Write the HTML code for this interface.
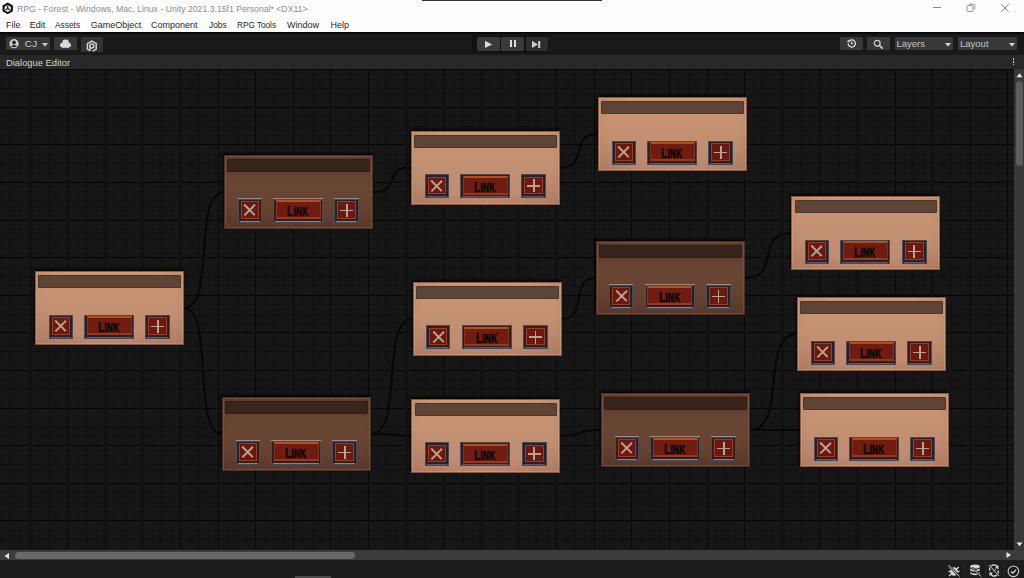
<!DOCTYPE html>
<html><head><meta charset="utf-8">
<style>
*{margin:0;padding:0;box-sizing:border-box}
html,body{width:1024px;height:578px;overflow:hidden;background:#1b1b1b;font-family:"Liberation Sans",sans-serif}
.a{position:absolute}
#titlebar{left:0;top:0;width:1024px;height:32px;background:#fefefe}
.menu{position:absolute;top:20px;font-size:9px;color:#262626;white-space:nowrap;line-height:11px}
#toolbar{left:0;top:32px;width:1024px;height:23px;background:#191919;border-top:2px solid #080808}
.btn{position:absolute;background:#383838;border-radius:1px}
#tabbar{left:0;top:55px;width:1024px;height:14px;background:#282828}
#canvas{left:0;top:69px;width:1014px;height:481px;background-color:#161616;overflow:hidden}
#hscroll{left:0;top:550px;width:1024px;height:10px;background:#3b3b3b}
#vscroll{left:1014px;top:69px;width:10px;height:481px;background:#383838}
#status{left:0;top:560px;width:1024px;height:18px;background:#1c1c1c}
.txt{position:absolute;white-space:nowrap;color:#c4c4c4}
.node{position:absolute;width:149px;height:74px;background:linear-gradient(#c99574,#c49072 45%,#be8b71);border:1px solid #8a5a40;box-shadow:-1px -2px 2px #060609,inset 0 0 0 1px #d39c78}
.node::before{content:"";position:absolute;left:0;top:0;right:0;bottom:0;background:radial-gradient(ellipse 75% 80% at 50% 40%,rgba(0,0,0,0) 60%,rgba(70,30,15,.16) 100%)}
.node.D{background:linear-gradient(#5c3d2d,#6a4634 40%,#674432 70%,#5b3b2c);border-color:#4a3024;box-shadow:-1px -2px 2px #060609,inset 0 0 0 1px #7a5141}
.hdr{position:absolute;left:2.3px;top:3px;right:2.2px;height:13px;background:#5e4436;border:1px solid #4c3428;border-radius:1px}
.D .hdr{background:#37251c;border-color:#2e1e16}
.bx,.bp,.bl{position:absolute;top:42.5px;height:24px;background:#26212a;box-shadow:inset 0 0 0 1px #4c4852}
.bx{left:12.5px;width:24px}.bp{left:109.3px;width:25px}.bl{left:48px;width:50px}
.bx::before,.bp::before{content:"";position:absolute;left:3px;top:2.5px;right:3px;bottom:4px;background:#6a1810;border:1px solid #a03c1a}
.bl::before{content:"";position:absolute;left:2.5px;top:1.5px;right:2.5px;bottom:3.5px;background:#701c10;border-top:2px solid #b0501c;border-bottom:2px solid #983818;border-left:1px solid #8a3014;border-right:1px solid #8a3014}
.bx::after,.bp::after,.bl::after{content:"";position:absolute;left:2px;right:2px;bottom:1px;height:1px;background:#5e5666}
.D .bx,.D .bp,.D .bl{box-shadow:inset 0 0 0 1px #4c4852,0 -1px 0 #9a8a86}
.D .bx::after,.D .bp::after,.D .bl::after{background:#8a8290}
.xg,.pg{position:absolute;left:50%;top:11.8px;width:0;height:0}
.xg::before,.xg::after,.pg::before,.pg::after{content:"";position:absolute;background:#b8a290}
.xg::before,.xg::after{left:-7.7px;top:-0.85px;width:15.4px;height:1.7px}
.xg::before{transform:rotate(45deg)}.xg::after{transform:rotate(-45deg)}
.pg::before{left:-6.5px;top:-0.75px;width:13px;height:1.5px}.pg::after{left:-0.75px;top:-6.5px;width:1.5px;height:13px}
.bl span{position:absolute;left:0;right:0;top:5.9px;text-align:center;font:bold 8.4px/10px "Liberation Sans",sans-serif;color:#0b0808;transform:scale(0.98,1.45);transform-origin:50% 0;letter-spacing:0.35px;-webkit-text-stroke:0.5px #0b0808}
.bl span b{font-size:9.6px}
</style></head><body>
<div id="titlebar" class="a">
  <svg class="a" style="left:2px;top:2px" width="12" height="13" viewBox="0 0 12 13">
    <polygon points="5.7,0.6 10.9,3.5 10.9,9.3 5.7,12.2 0.5,9.3 0.5,3.5" fill="#121212"/>
    <polygon points="5.7,3 8.8,4.8 8.8,8.2 5.7,10 2.6,8.2 2.6,4.8" fill="#f2f2f2"/>
    <path d="M5.7 3.8 V6.5 L3.4 7.9 M5.7 6.5 L8 7.9" fill="none" stroke="#121212" stroke-width="1.2"/>
  </svg>
  <div class="txt" style="left:17px;top:4px;font-size:8.7px;color:#8c8c8c;line-height:11px">RPG - Forest - Windows, Mac, Linux - Unity 2021.3.15f1 Personal* &lt;DX11&gt;</div>
  <div class="a" style="left:422px;top:0;width:180px;height:1px;background:#333"></div>
  <div class="a" style="left:933px;top:7px;width:7.5px;height:1px;background:#8a8a8a"></div>
  <svg class="a" style="left:966px;top:3px" width="10" height="9" viewBox="0 0 10 9"><rect x="1" y="2.5" width="6" height="6" rx="1" fill="none" stroke="#8a8a8a" stroke-width="0.9"/><path d="M3 1.2 H7.5 Q8.8 1.2 8.8 2.5 V6.5" fill="none" stroke="#8a8a8a" stroke-width="0.9"/></svg>
  <svg class="a" style="left:1001px;top:4px" width="8" height="8" viewBox="0 0 8 8"><path d="M0.3 0.3L7.7 7.7M7.7 0.3L0.3 7.7" stroke="#7a7a7a" stroke-width="0.9"/></svg>
  <div class="menu" style="left:6px">File</div>
  <div class="menu" style="left:29.7px">Edit</div>
  <div class="menu" style="left:55px;transform:scaleX(0.93);transform-origin:0 0">Assets</div>
  <div class="menu" style="left:90.8px">GameObject</div>
  <div class="menu" style="left:151px">Component</div>
  <div class="menu" style="left:209.4px;transform:scaleX(0.93);transform-origin:0 0">Jobs</div>
  <div class="menu" style="left:237.1px;transform:scaleX(0.91);transform-origin:0 0">RPG Tools</div>
  <div class="menu" style="left:286.9px">Window</div>
  <div class="menu" style="left:330.5px">Help</div>
</div>
<div id="toolbar" class="a">
  <div class="btn" style="left:6px;top:3px;width:44px;height:13px"></div>
  <svg class="a" style="left:9px;top:5px" width="10" height="10" viewBox="0 0 10 10">
    <circle cx="5" cy="4.7" r="4.6" fill="#d2d2d2"/>
    <circle cx="5" cy="3.5" r="1.9" fill="#262626"/>
    <path d="M1.9 7.6 Q2.6 5.9 5 5.9 Q7.4 5.9 8.1 7.6 Q5 8.8 1.9 7.6Z" fill="#262626"/>
  </svg>
  <div class="txt" style="left:24.8px;top:4.3px;font-size:9.9px;color:#c8c8c8;letter-spacing:0.4px;line-height:11px">CJ</div>
  <svg class="a" style="left:41.5px;top:8.8px" width="6" height="4" viewBox="0 0 6 4"><polygon points="0,0 6,0 3,3.4" fill="#d0d0d0"/></svg>
  <div class="btn" style="left:54px;top:3px;width:23px;height:13px"></div>
  <svg class="a" style="left:59px;top:4.2px" width="13" height="11" viewBox="0 0 13 11">
    <circle cx="6.6" cy="5" r="3.4" fill="#d8d8d8"/>
    <circle cx="3.4" cy="7.2" r="2.4" fill="#d8d8d8"/>
    <circle cx="9.8" cy="7" r="2.3" fill="#d8d8d8"/>
    <rect x="3.2" y="6.5" width="6.8" height="3.3" fill="#d8d8d8"/>
  </svg>
  <div class="btn" style="left:81px;top:3px;width:22px;height:15px;background:#333"></div>
  <svg class="a" style="left:86px;top:5.5px" width="12" height="12" viewBox="0 0 12 12">
    <path d="M4 10.6 L1.4 9.1 V3.6 L5.8 1.1 L10.2 3.6 V9.1 L6.6 11.2" fill="none" stroke="#d2d2d2" stroke-width="1.5"/>
    <circle cx="5.8" cy="6.1" r="2" fill="none" stroke="#d2d2d2" stroke-width="1.5"/>
    <path d="M4.2 7.4 V10.4" stroke="#d2d2d2" stroke-width="1.5"/>
  </svg>
  <div class="a" style="left:472px;top:1px;width:77px;height:18px;background:#121212"></div>
  <div class="btn" style="left:477px;top:3px;width:23px;height:13.5px;background:#3a3a3a"></div>
  <div class="btn" style="left:501px;top:3px;width:23px;height:13.5px;background:#3a3a3a"></div>
  <div class="btn" style="left:526px;top:3px;width:21.5px;height:13.5px;background:#2e2e2e"></div>
  <svg class="a" style="left:484px;top:5.5px" width="9" height="9" viewBox="0 0 9 9"><polygon points="1,0.8 8.2,4.4 1,8" fill="#d8d8d8"/></svg>
  <div class="a" style="left:509.5px;top:6px;width:2px;height:7px;background:#e0e0e0"></div>
  <div class="a" style="left:514px;top:6px;width:2px;height:7px;background:#e0e0e0"></div>
  <svg class="a" style="left:531px;top:5.5px" width="10" height="9" viewBox="0 0 10 9"><polygon points="1,0.8 7,4.4 1,8" fill="#cfcfcf"/><rect x="7.2" y="1" width="2" height="7" fill="#cfcfcf"/></svg>
  <div class="btn" style="left:840px;top:3px;width:22.5px;height:13px"></div>
  <svg class="a" style="left:846px;top:4px" width="11" height="11" viewBox="0 0 11 11">
    <path d="M2.2 5.5 A3.6 3.6 0 1 0 3.3 2.9" fill="none" stroke="#dcdcdc" stroke-width="1.3"/>
    <polygon points="0.6,3.4 3.4,1.4 3.8,4.6" fill="#dcdcdc"/>
    <path d="M5.6 3.5 V5.8 H7.4" fill="none" stroke="#dcdcdc" stroke-width="1.1"/>
  </svg>
  <div class="btn" style="left:867px;top:3px;width:22.5px;height:13px"></div>
  <svg class="a" style="left:873px;top:4.5px" width="11" height="11" viewBox="0 0 11 11">
    <circle cx="4.2" cy="4.2" r="2.9" fill="none" stroke="#d8d8d8" stroke-width="1.2"/>
    <path d="M6.3 6.3 L9.6 9.6" stroke="#d8d8d8" stroke-width="1.6"/>
  </svg>
  <div class="btn" style="left:894.5px;top:3px;width:58px;height:13px"></div>
  <div class="txt" style="left:896.5px;top:3.6px;font-size:9.5px;color:#c4c4c4;line-height:11px">Layers</div>
  <svg class="a" style="left:945px;top:8.5px" width="6" height="4" viewBox="0 0 6 4"><polygon points="0,0 6,0 3,3.6" fill="#d8d8d8"/></svg>
  <div class="btn" style="left:958px;top:3px;width:58.5px;height:13px"></div>
  <div class="txt" style="left:960px;top:3.6px;font-size:9.5px;color:#c4c4c4;line-height:11px">Layout</div>
  <svg class="a" style="left:1008.5px;top:8.5px" width="6" height="4" viewBox="0 0 6 4"><polygon points="0,0 6,0 3,3.6" fill="#d8d8d8"/></svg>
</div>
<div id="tabbar" class="a">
  <div class="txt" style="left:6px;top:2px;font-size:9.4px;color:#d2d2d2;line-height:11px">Dialogue Editor</div>
  <div class="a" style="left:1012.5px;top:3px;width:1.6px;height:1.6px;background:#eee;border-radius:1px"></div>
  <div class="a" style="left:1012.5px;top:6px;width:1.6px;height:1.6px;background:#eee;border-radius:1px"></div>
  <div class="a" style="left:1012.5px;top:8.8px;width:1.6px;height:1.6px;background:#eee;border-radius:1px"></div>
</div>
<div id="canvas" class="a">
<!--CANVAS-->
<svg class="a" style="left:0;top:0" width="1014" height="481" shape-rendering="crispEdges">
<rect x="1" y="0" width="1" height="481" fill="#141414"/>
<rect x="20" y="0" width="1" height="481" fill="#141414"/>
<rect x="39" y="0" width="1" height="481" fill="#141414"/>
<rect x="58" y="0" width="1" height="481" fill="#141414"/>
<rect x="77" y="0" width="1" height="481" fill="#141414"/>
<rect x="96" y="0" width="1" height="481" fill="#141414"/>
<rect x="114" y="0" width="1" height="481" fill="#141414"/>
<rect x="133" y="0" width="1" height="481" fill="#141414"/>
<rect x="152" y="0" width="1" height="481" fill="#141414"/>
<rect x="171" y="0" width="1" height="481" fill="#141414"/>
<rect x="190" y="0" width="1" height="481" fill="#141414"/>
<rect x="208" y="0" width="1" height="481" fill="#141414"/>
<rect x="227" y="0" width="1" height="481" fill="#141414"/>
<rect x="246" y="0" width="1" height="481" fill="#141414"/>
<rect x="265" y="0" width="1" height="481" fill="#141414"/>
<rect x="284" y="0" width="1" height="481" fill="#141414"/>
<rect x="302" y="0" width="1" height="481" fill="#141414"/>
<rect x="321" y="0" width="1" height="481" fill="#141414"/>
<rect x="340" y="0" width="1" height="481" fill="#141414"/>
<rect x="359" y="0" width="1" height="481" fill="#141414"/>
<rect x="378" y="0" width="1" height="481" fill="#141414"/>
<rect x="396" y="0" width="1" height="481" fill="#141414"/>
<rect x="415" y="0" width="1" height="481" fill="#141414"/>
<rect x="434" y="0" width="1" height="481" fill="#141414"/>
<rect x="453" y="0" width="1" height="481" fill="#141414"/>
<rect x="472" y="0" width="1" height="481" fill="#141414"/>
<rect x="490" y="0" width="1" height="481" fill="#141414"/>
<rect x="509" y="0" width="1" height="481" fill="#141414"/>
<rect x="528" y="0" width="1" height="481" fill="#141414"/>
<rect x="547" y="0" width="1" height="481" fill="#141414"/>
<rect x="566" y="0" width="1" height="481" fill="#141414"/>
<rect x="584" y="0" width="1" height="481" fill="#141414"/>
<rect x="603" y="0" width="1" height="481" fill="#141414"/>
<rect x="622" y="0" width="1" height="481" fill="#141414"/>
<rect x="641" y="0" width="1" height="481" fill="#141414"/>
<rect x="660" y="0" width="1" height="481" fill="#141414"/>
<rect x="678" y="0" width="1" height="481" fill="#141414"/>
<rect x="697" y="0" width="1" height="481" fill="#141414"/>
<rect x="716" y="0" width="1" height="481" fill="#141414"/>
<rect x="735" y="0" width="1" height="481" fill="#141414"/>
<rect x="754" y="0" width="1" height="481" fill="#141414"/>
<rect x="772" y="0" width="1" height="481" fill="#141414"/>
<rect x="791" y="0" width="1" height="481" fill="#141414"/>
<rect x="810" y="0" width="1" height="481" fill="#141414"/>
<rect x="829" y="0" width="1" height="481" fill="#141414"/>
<rect x="848" y="0" width="1" height="481" fill="#141414"/>
<rect x="866" y="0" width="1" height="481" fill="#141414"/>
<rect x="885" y="0" width="1" height="481" fill="#141414"/>
<rect x="904" y="0" width="1" height="481" fill="#141414"/>
<rect x="923" y="0" width="1" height="481" fill="#141414"/>
<rect x="942" y="0" width="1" height="481" fill="#141414"/>
<rect x="960" y="0" width="1" height="481" fill="#141414"/>
<rect x="979" y="0" width="1" height="481" fill="#141414"/>
<rect x="998" y="0" width="1" height="481" fill="#141414"/>
<rect x="0" y="10" width="1014" height="1" fill="#141414"/>
<rect x="0" y="28" width="1014" height="1" fill="#141414"/>
<rect x="0" y="47" width="1014" height="1" fill="#141414"/>
<rect x="0" y="66" width="1014" height="1" fill="#141414"/>
<rect x="0" y="85" width="1014" height="1" fill="#141414"/>
<rect x="0" y="104" width="1014" height="1" fill="#141414"/>
<rect x="0" y="122" width="1014" height="1" fill="#141414"/>
<rect x="0" y="141" width="1014" height="1" fill="#141414"/>
<rect x="0" y="160" width="1014" height="1" fill="#141414"/>
<rect x="0" y="179" width="1014" height="1" fill="#141414"/>
<rect x="0" y="198" width="1014" height="1" fill="#141414"/>
<rect x="0" y="216" width="1014" height="1" fill="#141414"/>
<rect x="0" y="235" width="1014" height="1" fill="#141414"/>
<rect x="0" y="254" width="1014" height="1" fill="#141414"/>
<rect x="0" y="273" width="1014" height="1" fill="#141414"/>
<rect x="0" y="292" width="1014" height="1" fill="#141414"/>
<rect x="0" y="310" width="1014" height="1" fill="#141414"/>
<rect x="0" y="329" width="1014" height="1" fill="#141414"/>
<rect x="0" y="348" width="1014" height="1" fill="#141414"/>
<rect x="0" y="367" width="1014" height="1" fill="#141414"/>
<rect x="0" y="386" width="1014" height="1" fill="#141414"/>
<rect x="0" y="404" width="1014" height="1" fill="#141414"/>
<rect x="0" y="423" width="1014" height="1" fill="#141414"/>
<rect x="0" y="442" width="1014" height="1" fill="#141414"/>
<rect x="0" y="461" width="1014" height="1" fill="#141414"/>
<rect x="0" y="480" width="1014" height="1" fill="#141414"/>
<rect x="11" y="0" width="1" height="481" fill="#111111"/>
<rect x="48" y="0" width="1" height="481" fill="#111111"/>
<rect x="86" y="0" width="1" height="481" fill="#111111"/>
<rect x="124" y="0" width="1" height="481" fill="#111111"/>
<rect x="161" y="0" width="1" height="481" fill="#111111"/>
<rect x="199" y="0" width="1" height="481" fill="#111111"/>
<rect x="236" y="0" width="1" height="481" fill="#111111"/>
<rect x="274" y="0" width="1" height="481" fill="#111111"/>
<rect x="312" y="0" width="1" height="481" fill="#111111"/>
<rect x="349" y="0" width="1" height="481" fill="#111111"/>
<rect x="387" y="0" width="1" height="481" fill="#111111"/>
<rect x="424" y="0" width="1" height="481" fill="#111111"/>
<rect x="462" y="0" width="1" height="481" fill="#111111"/>
<rect x="500" y="0" width="1" height="481" fill="#111111"/>
<rect x="537" y="0" width="1" height="481" fill="#111111"/>
<rect x="575" y="0" width="1" height="481" fill="#111111"/>
<rect x="613" y="0" width="1" height="481" fill="#111111"/>
<rect x="650" y="0" width="1" height="481" fill="#111111"/>
<rect x="688" y="0" width="1" height="481" fill="#111111"/>
<rect x="725" y="0" width="1" height="481" fill="#111111"/>
<rect x="763" y="0" width="1" height="481" fill="#111111"/>
<rect x="801" y="0" width="1" height="481" fill="#111111"/>
<rect x="838" y="0" width="1" height="481" fill="#111111"/>
<rect x="876" y="0" width="1" height="481" fill="#111111"/>
<rect x="913" y="0" width="1" height="481" fill="#111111"/>
<rect x="951" y="0" width="1" height="481" fill="#111111"/>
<rect x="989" y="0" width="1" height="481" fill="#111111"/>
<rect x="0" y="19" width="1014" height="1" fill="#111111"/>
<rect x="0" y="57" width="1014" height="1" fill="#111111"/>
<rect x="0" y="94" width="1014" height="1" fill="#111111"/>
<rect x="0" y="132" width="1014" height="1" fill="#111111"/>
<rect x="0" y="169" width="1014" height="1" fill="#111111"/>
<rect x="0" y="207" width="1014" height="1" fill="#111111"/>
<rect x="0" y="245" width="1014" height="1" fill="#111111"/>
<rect x="0" y="282" width="1014" height="1" fill="#111111"/>
<rect x="0" y="320" width="1014" height="1" fill="#111111"/>
<rect x="0" y="357" width="1014" height="1" fill="#111111"/>
<rect x="0" y="395" width="1014" height="1" fill="#111111"/>
<rect x="0" y="433" width="1014" height="1" fill="#111111"/>
<rect x="0" y="470" width="1014" height="1" fill="#111111"/>
<rect x="30" y="0" width="1" height="481" fill="#080808"/>
<rect x="67" y="0" width="1" height="481" fill="#080808"/>
<rect x="105" y="0" width="1" height="481" fill="#080808"/>
<rect x="142" y="0" width="1" height="481" fill="#080808"/>
<rect x="180" y="0" width="1" height="481" fill="#080808"/>
<rect x="218" y="0" width="1" height="481" fill="#080808"/>
<rect x="255" y="0" width="1" height="481" fill="#080808"/>
<rect x="293" y="0" width="1" height="481" fill="#080808"/>
<rect x="330" y="0" width="1" height="481" fill="#080808"/>
<rect x="368" y="0" width="1" height="481" fill="#080808"/>
<rect x="406" y="0" width="1" height="481" fill="#080808"/>
<rect x="443" y="0" width="1" height="481" fill="#080808"/>
<rect x="481" y="0" width="1" height="481" fill="#080808"/>
<rect x="518" y="0" width="1" height="481" fill="#080808"/>
<rect x="556" y="0" width="1" height="481" fill="#080808"/>
<rect x="594" y="0" width="1" height="481" fill="#080808"/>
<rect x="631" y="0" width="1" height="481" fill="#080808"/>
<rect x="669" y="0" width="1" height="481" fill="#080808"/>
<rect x="707" y="0" width="1" height="481" fill="#080808"/>
<rect x="744" y="0" width="1" height="481" fill="#080808"/>
<rect x="782" y="0" width="1" height="481" fill="#080808"/>
<rect x="819" y="0" width="1" height="481" fill="#080808"/>
<rect x="857" y="0" width="1" height="481" fill="#080808"/>
<rect x="895" y="0" width="1" height="481" fill="#080808"/>
<rect x="932" y="0" width="1" height="481" fill="#080808"/>
<rect x="970" y="0" width="1" height="481" fill="#080808"/>
<rect x="1007" y="0" width="1" height="481" fill="#080808"/>
<rect x="0" y="0" width="1014" height="1" fill="#080808"/>
<rect x="0" y="38" width="1014" height="1" fill="#080808"/>
<rect x="0" y="75" width="1014" height="1" fill="#080808"/>
<rect x="0" y="113" width="1014" height="1" fill="#080808"/>
<rect x="0" y="151" width="1014" height="1" fill="#080808"/>
<rect x="0" y="188" width="1014" height="1" fill="#080808"/>
<rect x="0" y="226" width="1014" height="1" fill="#080808"/>
<rect x="0" y="263" width="1014" height="1" fill="#080808"/>
<rect x="0" y="301" width="1014" height="1" fill="#080808"/>
<rect x="0" y="339" width="1014" height="1" fill="#080808"/>
<rect x="0" y="376" width="1014" height="1" fill="#080808"/>
<rect x="0" y="414" width="1014" height="1" fill="#080808"/>
<rect x="0" y="451" width="1014" height="1" fill="#080808"/>
</svg>
<svg class="a" style="left:0;top:0" width="1014" height="481">
<path d="M184.0 239.0 C216.0 239.0 192.0 123.0 224.0 123.0" fill="none" stroke="#070707" stroke-width="2.1"/>
<path d="M184.0 239.0 C214.4 239.0 191.6 365.0 222.0 365.0" fill="none" stroke="#070707" stroke-width="2.1"/>
<path d="M373.0 123.0 C403.4 123.0 380.6 98.6 411.0 98.6" fill="none" stroke="#070707" stroke-width="2.1"/>
<path d="M560.0 98.6 C590.4 98.6 567.6 65.0 598.0 65.0" fill="none" stroke="#070707" stroke-width="2.1"/>
<path d="M371.0 365.0 C404.4 365.0 379.4 249.8 412.8 249.8" fill="none" stroke="#070707" stroke-width="2.1"/>
<path d="M371.0 365.0 C403.2 365.0 379.1 366.5 411.3 366.5" fill="none" stroke="#070707" stroke-width="2.1"/>
<path d="M561.8 249.8 C589.0 249.8 568.6 209.0 595.8 209.0" fill="none" stroke="#070707" stroke-width="2.1"/>
<path d="M744.8 209.0 C782.0 209.0 754.1 164.0 791.3 164.0" fill="none" stroke="#070707" stroke-width="2.1"/>
<path d="M560.3 366.5 C592.9 366.5 568.4 361.0 601.0 361.0" fill="none" stroke="#070707" stroke-width="2.1"/>
<path d="M750.0 361.0 C787.6 361.0 759.4 265.0 797.0 265.0" fill="none" stroke="#070707" stroke-width="2.1"/>
<path d="M750.0 361.0 C790.2 361.0 760.0 361.0 800.2 361.0" fill="none" stroke="#070707" stroke-width="2.1"/>
</svg>
<div class="node L" style="left:35.0px;top:202.0px"><div class="hdr"></div><div class="bx"><i class="xg"></i></div><div class="bl"><span><b>L</b>INK</span></div><div class="bp"><i class="pg"></i></div></div>
<div class="node D" style="left:224.0px;top:86.0px"><div class="hdr"></div><div class="bx"><i class="xg"></i></div><div class="bl"><span><b>L</b>INK</span></div><div class="bp"><i class="pg"></i></div></div>
<div class="node L" style="left:411.0px;top:61.6px"><div class="hdr"></div><div class="bx"><i class="xg"></i></div><div class="bl"><span><b>L</b>INK</span></div><div class="bp"><i class="pg"></i></div></div>
<div class="node L" style="left:598.0px;top:28.0px"><div class="hdr"></div><div class="bx"><i class="xg"></i></div><div class="bl"><span><b>L</b>INK</span></div><div class="bp"><i class="pg"></i></div></div>
<div class="node L" style="left:791.3px;top:127.0px"><div class="hdr"></div><div class="bx"><i class="xg"></i></div><div class="bl"><span><b>L</b>INK</span></div><div class="bp"><i class="pg"></i></div></div>
<div class="node D" style="left:595.8px;top:172.0px"><div class="hdr"></div><div class="bx"><i class="xg"></i></div><div class="bl"><span><b>L</b>INK</span></div><div class="bp"><i class="pg"></i></div></div>
<div class="node L" style="left:412.8px;top:212.8px"><div class="hdr"></div><div class="bx"><i class="xg"></i></div><div class="bl"><span><b>L</b>INK</span></div><div class="bp"><i class="pg"></i></div></div>
<div class="node L" style="left:797.0px;top:228.0px"><div class="hdr"></div><div class="bx"><i class="xg"></i></div><div class="bl"><span><b>L</b>INK</span></div><div class="bp"><i class="pg"></i></div></div>
<div class="node D" style="left:222.0px;top:328.0px"><div class="hdr"></div><div class="bx"><i class="xg"></i></div><div class="bl"><span><b>L</b>INK</span></div><div class="bp"><i class="pg"></i></div></div>
<div class="node L" style="left:411.3px;top:329.5px"><div class="hdr"></div><div class="bx"><i class="xg"></i></div><div class="bl"><span><b>L</b>INK</span></div><div class="bp"><i class="pg"></i></div></div>
<div class="node D" style="left:601.0px;top:324.0px"><div class="hdr"></div><div class="bx"><i class="xg"></i></div><div class="bl"><span><b>L</b>INK</span></div><div class="bp"><i class="pg"></i></div></div>
<div class="node L" style="left:800.2px;top:324.0px"><div class="hdr"></div><div class="bx"><i class="xg"></i></div><div class="bl"><span><b>L</b>INK</span></div><div class="bp"><i class="pg"></i></div></div>
<!--/CANVAS-->
</div>
<div id="hscroll" class="a">
  <div class="a" style="left:15px;top:2px;width:340px;height:7px;background:#676767;border-radius:3.5px"></div>
  <svg class="a" style="left:3.5px;top:2.5px" width="6" height="6" viewBox="0 0 6 6"><polygon points="5,0 5,6 0.5,3" fill="#e6e6e6"/></svg>
  <svg class="a" style="left:1006px;top:2px" width="6" height="6" viewBox="0 0 6 6"><polygon points="0.5,0 0.5,6 5,3" fill="#e6e6e6"/></svg>
</div>
<div id="vscroll" class="a">
  <svg class="a" style="left:2px;top:4px" width="7" height="5" viewBox="0 0 7 5"><polygon points="0.5,4.2 6.5,4.2 3.5,0.3" fill="#e6e6e6"/></svg>
  <div class="a" style="left:2px;top:12px;width:7px;height:85px;background:#5c5c5c;border-radius:3.5px"></div>
  <svg class="a" style="left:2px;top:473px" width="7" height="5" viewBox="0 0 7 5"><polygon points="0.5,0.5 6.5,0.5 3.5,4.2" fill="#e6e6e6"/></svg>
</div>
<div id="status" class="a">
  <div class="a" style="left:295px;top:16px;width:36px;height:2px;background:#4a4a4a"></div>
  <div class="a" style="left:964px;top:1px;width:1px;height:17px;background:#262626"></div>
  <div class="a" style="left:985px;top:1px;width:1px;height:17px;background:#262626"></div>
  <div class="a" style="left:1004px;top:1px;width:1px;height:17px;background:#262626"></div>
  <svg class="a" style="left:947px;top:4px" width="14" height="13" viewBox="0 0 14 13">
    <ellipse cx="7" cy="7.5" rx="3.6" ry="4.2" fill="#d4d4d4"/>
    <path d="M2 3 L5 5.5 M12 3 L9 5.5 M1.5 7.5 H4 M12.5 7.5 H10 M2 12 L4.5 10 M12 12 L9.5 10" stroke="#d4d4d4" stroke-width="1.3"/>
    <path d="M1.5 1 L12.5 12.5" stroke="#1c1c1c" stroke-width="2.2"/><path d="M1.5 1 L12.5 12.5" stroke="#d4d4d4" stroke-width="1"/>
  </svg>
  <svg class="a" style="left:968.5px;top:4px" width="13" height="13" viewBox="0 0 13 13">
    <ellipse cx="6" cy="2.6" rx="4.8" ry="2" fill="#d4d4d4"/>
    <path d="M1.2 4.6 Q6 7.4 10.8 4.6 V6.4 Q6 9.2 1.2 6.4Z" fill="#d4d4d4"/>
    <path d="M1.2 8.2 Q6 11 10.8 8.2 V9.8 Q6 12.6 1.2 9.8Z" fill="#d4d4d4"/>
    <path d="M3 3.5 L12 12.5" stroke="#1c1c1c" stroke-width="2"/><path d="M3 3.5 L12 12.5" stroke="#d4d4d4" stroke-width="1"/>
  </svg>
  <svg class="a" style="left:988px;top:4px" width="12" height="13" viewBox="0 0 12 13">
    <path d="M2 6.5 A4 4 0 0 1 9.5 3.5 M10 6.5 A4 4 0 0 1 2.5 9.5" fill="none" stroke="#d4d4d4" stroke-width="1.5"/>
    <polygon points="10.5,1 10.5,5 7,4" fill="#d4d4d4"/><polygon points="1.5,12 1.5,8 5,9" fill="#d4d4d4"/>
    <rect x="5" y="5" width="2.5" height="3" fill="#d4d4d4"/>
    <path d="M1 1 L11 12" stroke="#1c1c1c" stroke-width="2"/><path d="M1 1 L11 12" stroke="#d4d4d4" stroke-width="1"/>
  </svg>
  <svg class="a" style="left:1007px;top:4.5px" width="13" height="13" viewBox="0 0 13 13">
    <circle cx="6.4" cy="6.3" r="5.3" fill="none" stroke="#d0d0d0" stroke-width="1.1"/>
    <path d="M3.9 6.4 L5.7 8 L9 4.9" fill="none" stroke="#d0d0d0" stroke-width="1.4"/>
  </svg>
</div>
</body></html>
